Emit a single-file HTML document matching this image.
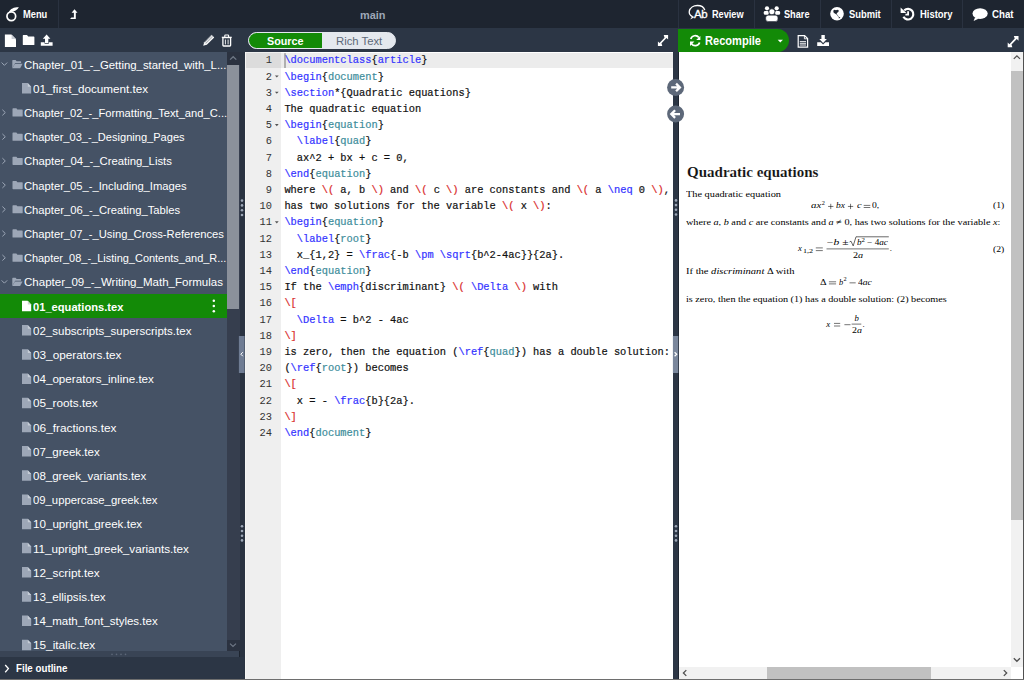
<!DOCTYPE html>
<html><head><meta charset="utf-8"><title>Overleaf</title>
<style>
*{margin:0;padding:0;box-sizing:border-box}
html,body{width:1024px;height:680px;overflow:hidden;background:#1e2530;position:relative;font-family:"Liberation Sans",sans-serif}
.a{position:absolute}
.t{line-height:0;white-space:nowrap}
svg{position:absolute;overflow:visible}
</style></head><body>

<div class="a" style="left:0px;top:0px;width:1024px;height:27.5px;background:#1e2530;"></div>
<div class="a t" style="left:23.00px;top:14.22px;font-family:'Liberation Sans',sans-serif;font-size:11.2px;color:#fff;font-weight:bold;font-style:normal;transform:scaleX(0.8310);transform-origin:0 0;">Menu</div>
<div class="a" style="left:58.1px;top:0px;width:1px;height:27.5px;background:#2a3240;"></div>
<div class="a t" style="left:359.80px;top:14.99px;font-family:'Liberation Sans',sans-serif;font-size:11px;color:#9da7b7;font-weight:bold;font-style:normal;transform:scaleX(0.9932);transform-origin:0 0;">main</div>
<div class="a" style="left:678.2px;top:0px;width:1px;height:27.5px;background:#2a3240;"></div>
<div class="a" style="left:754.4px;top:0px;width:1px;height:27.5px;background:#2a3240;"></div>
<div class="a" style="left:819.5px;top:0px;width:1px;height:27.5px;background:#2a3240;"></div>
<div class="a" style="left:890.5px;top:0px;width:1px;height:27.5px;background:#2a3240;"></div>
<div class="a" style="left:962.3px;top:0px;width:1px;height:27.5px;background:#2a3240;"></div>
<div class="a t" style="left:712.40px;top:14.38px;font-family:'Liberation Sans',sans-serif;font-size:11.3px;color:#fff;font-weight:bold;font-style:normal;transform:scaleX(0.8114);transform-origin:0 0;">Review</div>
<div class="a t" style="left:784.00px;top:14.38px;font-family:'Liberation Sans',sans-serif;font-size:11.3px;color:#fff;font-weight:bold;font-style:normal;transform:scaleX(0.8119);transform-origin:0 0;">Share</div>
<div class="a t" style="left:848.70px;top:14.38px;font-family:'Liberation Sans',sans-serif;font-size:11.3px;color:#fff;font-weight:bold;font-style:normal;transform:scaleX(0.8278);transform-origin:0 0;">Submit</div>
<div class="a t" style="left:919.70px;top:14.38px;font-family:'Liberation Sans',sans-serif;font-size:11.3px;color:#fff;font-weight:bold;font-style:normal;transform:scaleX(0.8348);transform-origin:0 0;">History</div>
<div class="a t" style="left:992.00px;top:14.38px;font-family:'Liberation Sans',sans-serif;font-size:11.3px;color:#fff;font-weight:bold;font-style:normal;transform:scaleX(0.8562);transform-origin:0 0;">Chat</div>
<div class="a" style="left:0px;top:27.5px;width:1024px;height:24.25px;background:#2c3645;"></div>
<div class="a" style="left:248.1px;top:31.9px;width:147.7px;height:17.2px;border-radius:9px;background:#e4e8ee;border:1.3px solid #e4e8ee"></div>
<div class="a" style="left:249.4px;top:33.2px;width:72.5px;height:14.6px;border-radius:8px 0 0 8px;background:#138a07"></div>
<div class="a t" style="left:266.90px;top:40.95px;font-family:'Liberation Sans',sans-serif;font-size:11.4px;color:#fff;font-weight:bold;font-style:normal;transform:scaleX(0.9470);transform-origin:0 0;">Source</div>
<div class="a t" style="left:336.00px;top:40.95px;font-family:'Liberation Sans',sans-serif;font-size:11.4px;color:#5d6879;font-weight:normal;font-style:normal;transform:scaleX(0.9920);transform-origin:0 0;">Rich Text</div>
<div class="a" style="left:678.4px;top:28.6px;width:110.4px;height:23.4px;border-radius:0 11.7px 11.7px 0;background:#138a07"></div>
<div class="a t" style="left:705.00px;top:40.74px;font-family:'Liberation Sans',sans-serif;font-size:12px;color:#fff;font-weight:bold;font-style:normal;transform:scaleX(0.9228);transform-origin:0 0;">Recompile</div>
<div class="a" style="left:0px;top:51.75px;width:227px;height:598.95px;background:#455265;"></div>
<div class="a t" style="left:24.30px;top:64.52px;font-family:'Liberation Sans',sans-serif;font-size:11.5px;color:#fff;font-weight:normal;font-style:normal;transform:scaleX(0.9894);transform-origin:0 0;">Chapter_01_-_Getting_started_with_L...</div>
<div class="a t" style="left:33.25px;top:88.72px;font-family:'Liberation Sans',sans-serif;font-size:11.5px;color:#fff;font-weight:normal;font-style:normal;transform:scaleX(1.0177);transform-origin:0 0;">01_first_document.tex</div>
<div class="a t" style="left:24.30px;top:112.92px;font-family:'Liberation Sans',sans-serif;font-size:11.5px;color:#fff;font-weight:normal;font-style:normal;transform:scaleX(0.9716);transform-origin:0 0;">Chapter_02_-_Formatting_Text_and_C...</div>
<div class="a t" style="left:24.30px;top:137.12px;font-family:'Liberation Sans',sans-serif;font-size:11.5px;color:#fff;font-weight:normal;font-style:normal;transform:scaleX(0.9624);transform-origin:0 0;">Chapter_03_-_Designing_Pages</div>
<div class="a t" style="left:24.30px;top:161.32px;font-family:'Liberation Sans',sans-serif;font-size:11.5px;color:#fff;font-weight:normal;font-style:normal;transform:scaleX(0.9842);transform-origin:0 0;">Chapter_04_-_Creating_Lists</div>
<div class="a t" style="left:24.30px;top:185.52px;font-family:'Liberation Sans',sans-serif;font-size:11.5px;color:#fff;font-weight:normal;font-style:normal;transform:scaleX(0.9744);transform-origin:0 0;">Chapter_05_-_Including_Images</div>
<div class="a t" style="left:24.30px;top:209.72px;font-family:'Liberation Sans',sans-serif;font-size:11.5px;color:#fff;font-weight:normal;font-style:normal;transform:scaleX(0.9767);transform-origin:0 0;">Chapter_06_-_Creating_Tables</div>
<div class="a t" style="left:24.30px;top:233.92px;font-family:'Liberation Sans',sans-serif;font-size:11.5px;color:#fff;font-weight:normal;font-style:normal;transform:scaleX(0.9742);transform-origin:0 0;">Chapter_07_-_Using_Cross-References</div>
<div class="a t" style="left:24.30px;top:258.12px;font-family:'Liberation Sans',sans-serif;font-size:11.5px;color:#fff;font-weight:normal;font-style:normal;transform:scaleX(0.9536);transform-origin:0 0;">Chapter_08_-_Listing_Contents_and_R...</div>
<div class="a t" style="left:24.30px;top:282.32px;font-family:'Liberation Sans',sans-serif;font-size:11.5px;color:#fff;font-weight:normal;font-style:normal;transform:scaleX(1.0021);transform-origin:0 0;">Chapter_09_-_Writing_Math_Formulas</div>
<div class="a" style="left:0px;top:293.75px;width:227px;height:24.2px;background:#138a07;"></div>
<div class="a t" style="left:33.25px;top:306.52px;font-family:'Liberation Sans',sans-serif;font-size:11.5px;color:#fff;font-weight:bold;font-style:normal;transform:scaleX(0.9688);transform-origin:0 0;">01_equations.tex</div>
<div class="a t" style="left:33.25px;top:330.72px;font-family:'Liberation Sans',sans-serif;font-size:11.5px;color:#fff;font-weight:normal;font-style:normal;transform:scaleX(1.0033);transform-origin:0 0;">02_subscripts_superscripts.tex</div>
<div class="a t" style="left:33.25px;top:354.92px;font-family:'Liberation Sans',sans-serif;font-size:11.5px;color:#fff;font-weight:normal;font-style:normal;transform:scaleX(1.0243);transform-origin:0 0;">03_operators.tex</div>
<div class="a t" style="left:33.25px;top:379.12px;font-family:'Liberation Sans',sans-serif;font-size:11.5px;color:#fff;font-weight:normal;font-style:normal;transform:scaleX(1.0113);transform-origin:0 0;">04_operators_inline.tex</div>
<div class="a t" style="left:33.25px;top:403.32px;font-family:'Liberation Sans',sans-serif;font-size:11.5px;color:#fff;font-weight:normal;font-style:normal;transform:scaleX(1.0215);transform-origin:0 0;">05_roots.tex</div>
<div class="a t" style="left:33.25px;top:427.52px;font-family:'Liberation Sans',sans-serif;font-size:11.5px;color:#fff;font-weight:normal;font-style:normal;transform:scaleX(1.0273);transform-origin:0 0;">06_fractions.tex</div>
<div class="a t" style="left:33.25px;top:451.72px;font-family:'Liberation Sans',sans-serif;font-size:11.5px;color:#fff;font-weight:normal;font-style:normal;transform:scaleX(1.0039);transform-origin:0 0;">07_greek.tex</div>
<div class="a t" style="left:33.25px;top:475.92px;font-family:'Liberation Sans',sans-serif;font-size:11.5px;color:#fff;font-weight:normal;font-style:normal;transform:scaleX(1.0009);transform-origin:0 0;">08_greek_variants.tex</div>
<div class="a t" style="left:33.25px;top:500.12px;font-family:'Liberation Sans',sans-serif;font-size:11.5px;color:#fff;font-weight:normal;font-style:normal;transform:scaleX(0.9823);transform-origin:0 0;">09_uppercase_greek.tex</div>
<div class="a t" style="left:33.25px;top:524.32px;font-family:'Liberation Sans',sans-serif;font-size:11.5px;color:#fff;font-weight:normal;font-style:normal;transform:scaleX(1.0102);transform-origin:0 0;">10_upright_greek.tex</div>
<div class="a t" style="left:33.25px;top:548.52px;font-family:'Liberation Sans',sans-serif;font-size:11.5px;color:#fff;font-weight:normal;font-style:normal;transform:scaleX(1.0133);transform-origin:0 0;">11_upright_greek_variants.tex</div>
<div class="a t" style="left:33.25px;top:572.72px;font-family:'Liberation Sans',sans-serif;font-size:11.5px;color:#fff;font-weight:normal;font-style:normal;transform:scaleX(1.0223);transform-origin:0 0;">12_script.tex</div>
<div class="a t" style="left:33.25px;top:596.92px;font-family:'Liberation Sans',sans-serif;font-size:11.5px;color:#fff;font-weight:normal;font-style:normal;transform:scaleX(1.0057);transform-origin:0 0;">13_ellipsis.tex</div>
<div class="a t" style="left:33.25px;top:621.12px;font-family:'Liberation Sans',sans-serif;font-size:11.5px;color:#fff;font-weight:normal;font-style:normal;transform:scaleX(0.9999);transform-origin:0 0;">14_math_font_styles.tex</div>
<div class="a t" style="left:33.25px;top:645.32px;font-family:'Liberation Sans',sans-serif;font-size:11.5px;color:#fff;font-weight:normal;font-style:normal;transform:scaleX(1.0234);transform-origin:0 0;">15_italic.tex</div>
<div class="a" style="left:227px;top:51.75px;width:12.5px;height:598.95px;background:#363e4e;"></div>
<div class="a" style="left:227px;top:51.75px;width:12.5px;height:13.3px;background:#2b3240;"></div>
<div class="a" style="left:227px;top:639.6px;width:12.5px;height:11.1px;background:#2b3240;"></div>
<div class="a" style="left:227px;top:65px;width:12.3px;height:244px;background:#8b919b;"></div>
<div class="a" style="left:239.5px;top:51.75px;width:5.7px;height:628.25px;background:#2a3341;"></div>
<div class="a" style="left:0px;top:650.7px;width:239px;height:6.3px;background:#394455;"></div>
<div class="a" style="left:0px;top:657px;width:244.4px;height:22px;background:#2c3645;"></div>
<div class="a t" style="left:15.50px;top:668.32px;font-family:'Liberation Sans',sans-serif;font-size:11.2px;color:#fff;font-weight:bold;font-style:normal;transform:scaleX(0.8712);transform-origin:0 0;">File outline</div>
<div class="a" style="left:245.2px;top:51.75px;width:427.90000000000003px;height:628.25px;background:#ffffff;"></div>
<div class="a" style="left:245.2px;top:51.75px;width:35.900000000000034px;height:628.25px;background:#efefef;"></div>
<div class="a" style="left:245.2px;top:51.75px;width:1px;height:628.25px;background:#f6f6f4;"></div>
<div class="a" style="left:246.2px;top:53.199999999999996px;width:34.900000000000034px;height:15.0px;background:#dcdcdc;"></div>
<div class="a" style="left:281.1px;top:53.199999999999996px;width:392.0px;height:15.0px;background:#ececec;"></div>
<div class="a t" style="left:284.40px;top:60.40px;font-family:'Liberation Mono',monospace;font-size:10.37px;color:#111;font-weight:normal;font-style:normal;white-space:pre;-webkit-text-stroke:0.2px currentColor"><span style="color:#3434ff">\documentclass</span>{<span style="color:#3434ff">article</span>}</div>
<div class="a t" style="left:265.68px;top:60.40px;font-family:'Liberation Mono',monospace;font-size:10.37px;color:#333;font-weight:normal;font-style:normal;">1</div>
<div class="a t" style="left:284.40px;top:76.60px;font-family:'Liberation Mono',monospace;font-size:10.37px;color:#111;font-weight:normal;font-style:normal;white-space:pre;-webkit-text-stroke:0.2px currentColor"><span style="color:#3434ff">\begin</span>{<span style="color:#3d8d9b">document</span>}</div>
<div class="a t" style="left:265.68px;top:76.60px;font-family:'Liberation Mono',monospace;font-size:10.37px;color:#333;font-weight:normal;font-style:normal;">2</div>
<div class="a t" style="left:284.40px;top:92.80px;font-family:'Liberation Mono',monospace;font-size:10.37px;color:#111;font-weight:normal;font-style:normal;white-space:pre;-webkit-text-stroke:0.2px currentColor"><span style="color:#3434ff">\section</span>*{Quadratic equations}</div>
<div class="a t" style="left:265.68px;top:92.80px;font-family:'Liberation Mono',monospace;font-size:10.37px;color:#333;font-weight:normal;font-style:normal;">3</div>
<div class="a t" style="left:284.40px;top:109.00px;font-family:'Liberation Mono',monospace;font-size:10.37px;color:#111;font-weight:normal;font-style:normal;white-space:pre;-webkit-text-stroke:0.2px currentColor">The quadratic equation</div>
<div class="a t" style="left:265.68px;top:109.00px;font-family:'Liberation Mono',monospace;font-size:10.37px;color:#333;font-weight:normal;font-style:normal;">4</div>
<div class="a t" style="left:284.40px;top:125.20px;font-family:'Liberation Mono',monospace;font-size:10.37px;color:#111;font-weight:normal;font-style:normal;white-space:pre;-webkit-text-stroke:0.2px currentColor"><span style="color:#3434ff">\begin</span>{<span style="color:#3d8d9b">equation</span>}</div>
<div class="a t" style="left:265.68px;top:125.20px;font-family:'Liberation Mono',monospace;font-size:10.37px;color:#333;font-weight:normal;font-style:normal;">5</div>
<div class="a t" style="left:284.40px;top:141.40px;font-family:'Liberation Mono',monospace;font-size:10.37px;color:#111;font-weight:normal;font-style:normal;white-space:pre;-webkit-text-stroke:0.2px currentColor">  <span style="color:#3434ff">\label</span>{<span style="color:#3d8d9b">quad</span>}</div>
<div class="a t" style="left:265.68px;top:141.40px;font-family:'Liberation Mono',monospace;font-size:10.37px;color:#333;font-weight:normal;font-style:normal;">6</div>
<div class="a t" style="left:284.40px;top:157.60px;font-family:'Liberation Mono',monospace;font-size:10.37px;color:#111;font-weight:normal;font-style:normal;white-space:pre;-webkit-text-stroke:0.2px currentColor">  ax^2 + bx + c = 0,</div>
<div class="a t" style="left:265.68px;top:157.60px;font-family:'Liberation Mono',monospace;font-size:10.37px;color:#333;font-weight:normal;font-style:normal;">7</div>
<div class="a t" style="left:284.40px;top:173.80px;font-family:'Liberation Mono',monospace;font-size:10.37px;color:#111;font-weight:normal;font-style:normal;white-space:pre;-webkit-text-stroke:0.2px currentColor"><span style="color:#3434ff">\end</span>{<span style="color:#3d8d9b">equation</span>}</div>
<div class="a t" style="left:265.68px;top:173.80px;font-family:'Liberation Mono',monospace;font-size:10.37px;color:#333;font-weight:normal;font-style:normal;">8</div>
<div class="a t" style="left:284.40px;top:190.00px;font-family:'Liberation Mono',monospace;font-size:10.37px;color:#111;font-weight:normal;font-style:normal;white-space:pre;-webkit-text-stroke:0.2px currentColor">where <span style="color:#d92c2c">\(</span> a, b <span style="color:#d92c2c">\)</span> and <span style="color:#d92c2c">\(</span> c <span style="color:#d92c2c">\)</span> are constants and <span style="color:#d92c2c">\(</span> a <span style="color:#3434ff">\neq</span> 0 <span style="color:#d92c2c">\)</span>,</div>
<div class="a t" style="left:265.68px;top:190.00px;font-family:'Liberation Mono',monospace;font-size:10.37px;color:#333;font-weight:normal;font-style:normal;">9</div>
<div class="a t" style="left:284.40px;top:206.20px;font-family:'Liberation Mono',monospace;font-size:10.37px;color:#111;font-weight:normal;font-style:normal;white-space:pre;-webkit-text-stroke:0.2px currentColor">has two solutions for the variable <span style="color:#d92c2c">\(</span> x <span style="color:#d92c2c">\)</span>:</div>
<div class="a t" style="left:259.46px;top:206.20px;font-family:'Liberation Mono',monospace;font-size:10.37px;color:#333;font-weight:normal;font-style:normal;">10</div>
<div class="a t" style="left:284.40px;top:222.40px;font-family:'Liberation Mono',monospace;font-size:10.37px;color:#111;font-weight:normal;font-style:normal;white-space:pre;-webkit-text-stroke:0.2px currentColor"><span style="color:#3434ff">\begin</span>{<span style="color:#3d8d9b">equation</span>}</div>
<div class="a t" style="left:259.46px;top:222.40px;font-family:'Liberation Mono',monospace;font-size:10.37px;color:#333;font-weight:normal;font-style:normal;">11</div>
<div class="a t" style="left:284.40px;top:238.60px;font-family:'Liberation Mono',monospace;font-size:10.37px;color:#111;font-weight:normal;font-style:normal;white-space:pre;-webkit-text-stroke:0.2px currentColor">  <span style="color:#3434ff">\label</span>{<span style="color:#3d8d9b">root</span>}</div>
<div class="a t" style="left:259.46px;top:238.60px;font-family:'Liberation Mono',monospace;font-size:10.37px;color:#333;font-weight:normal;font-style:normal;">12</div>
<div class="a t" style="left:284.40px;top:254.80px;font-family:'Liberation Mono',monospace;font-size:10.37px;color:#111;font-weight:normal;font-style:normal;white-space:pre;-webkit-text-stroke:0.2px currentColor">  x_{1,2} = <span style="color:#3434ff">\frac</span>{-b <span style="color:#3434ff">\pm</span> <span style="color:#3434ff">\sqrt</span>{b^2-4ac}}{2a}.</div>
<div class="a t" style="left:259.46px;top:254.80px;font-family:'Liberation Mono',monospace;font-size:10.37px;color:#333;font-weight:normal;font-style:normal;">13</div>
<div class="a t" style="left:284.40px;top:271.00px;font-family:'Liberation Mono',monospace;font-size:10.37px;color:#111;font-weight:normal;font-style:normal;white-space:pre;-webkit-text-stroke:0.2px currentColor"><span style="color:#3434ff">\end</span>{<span style="color:#3d8d9b">equation</span>}</div>
<div class="a t" style="left:259.46px;top:271.00px;font-family:'Liberation Mono',monospace;font-size:10.37px;color:#333;font-weight:normal;font-style:normal;">14</div>
<div class="a t" style="left:284.40px;top:287.20px;font-family:'Liberation Mono',monospace;font-size:10.37px;color:#111;font-weight:normal;font-style:normal;white-space:pre;-webkit-text-stroke:0.2px currentColor">If the <span style="color:#3434ff">\emph</span>{discriminant} <span style="color:#d92c2c">\(</span> <span style="color:#3434ff">\Delta</span> <span style="color:#d92c2c">\)</span> with</div>
<div class="a t" style="left:259.46px;top:287.20px;font-family:'Liberation Mono',monospace;font-size:10.37px;color:#333;font-weight:normal;font-style:normal;">15</div>
<div class="a t" style="left:284.40px;top:303.40px;font-family:'Liberation Mono',monospace;font-size:10.37px;color:#111;font-weight:normal;font-style:normal;white-space:pre;-webkit-text-stroke:0.2px currentColor"><span style="color:#d92c2c">\[</span></div>
<div class="a t" style="left:259.46px;top:303.40px;font-family:'Liberation Mono',monospace;font-size:10.37px;color:#333;font-weight:normal;font-style:normal;">16</div>
<div class="a t" style="left:284.40px;top:319.60px;font-family:'Liberation Mono',monospace;font-size:10.37px;color:#111;font-weight:normal;font-style:normal;white-space:pre;-webkit-text-stroke:0.2px currentColor">  <span style="color:#3434ff">\Delta</span> = b^2 - 4ac</div>
<div class="a t" style="left:259.46px;top:319.60px;font-family:'Liberation Mono',monospace;font-size:10.37px;color:#333;font-weight:normal;font-style:normal;">17</div>
<div class="a t" style="left:284.40px;top:335.80px;font-family:'Liberation Mono',monospace;font-size:10.37px;color:#111;font-weight:normal;font-style:normal;white-space:pre;-webkit-text-stroke:0.2px currentColor"><span style="color:#d92c2c">\]</span></div>
<div class="a t" style="left:259.46px;top:335.80px;font-family:'Liberation Mono',monospace;font-size:10.37px;color:#333;font-weight:normal;font-style:normal;">18</div>
<div class="a t" style="left:284.40px;top:352.00px;font-family:'Liberation Mono',monospace;font-size:10.37px;color:#111;font-weight:normal;font-style:normal;white-space:pre;-webkit-text-stroke:0.2px currentColor">is zero, then the equation (<span style="color:#3434ff">\ref</span>{<span style="color:#3d8d9b">quad</span>}) has a double solution:</div>
<div class="a t" style="left:259.46px;top:352.00px;font-family:'Liberation Mono',monospace;font-size:10.37px;color:#333;font-weight:normal;font-style:normal;">19</div>
<div class="a t" style="left:284.40px;top:368.20px;font-family:'Liberation Mono',monospace;font-size:10.37px;color:#111;font-weight:normal;font-style:normal;white-space:pre;-webkit-text-stroke:0.2px currentColor">(<span style="color:#3434ff">\ref</span>{<span style="color:#3d8d9b">root</span>}) becomes</div>
<div class="a t" style="left:259.46px;top:368.20px;font-family:'Liberation Mono',monospace;font-size:10.37px;color:#333;font-weight:normal;font-style:normal;">20</div>
<div class="a t" style="left:284.40px;top:384.40px;font-family:'Liberation Mono',monospace;font-size:10.37px;color:#111;font-weight:normal;font-style:normal;white-space:pre;-webkit-text-stroke:0.2px currentColor"><span style="color:#d92c2c">\[</span></div>
<div class="a t" style="left:259.46px;top:384.40px;font-family:'Liberation Mono',monospace;font-size:10.37px;color:#333;font-weight:normal;font-style:normal;">21</div>
<div class="a t" style="left:284.40px;top:400.60px;font-family:'Liberation Mono',monospace;font-size:10.37px;color:#111;font-weight:normal;font-style:normal;white-space:pre;-webkit-text-stroke:0.2px currentColor">  x = - <span style="color:#3434ff">\frac</span>{b}{2a}.</div>
<div class="a t" style="left:259.46px;top:400.60px;font-family:'Liberation Mono',monospace;font-size:10.37px;color:#333;font-weight:normal;font-style:normal;">22</div>
<div class="a t" style="left:284.40px;top:416.80px;font-family:'Liberation Mono',monospace;font-size:10.37px;color:#111;font-weight:normal;font-style:normal;white-space:pre;-webkit-text-stroke:0.2px currentColor"><span style="color:#d92c2c">\]</span></div>
<div class="a t" style="left:259.46px;top:416.80px;font-family:'Liberation Mono',monospace;font-size:10.37px;color:#333;font-weight:normal;font-style:normal;">23</div>
<div class="a t" style="left:284.40px;top:433.00px;font-family:'Liberation Mono',monospace;font-size:10.37px;color:#111;font-weight:normal;font-style:normal;white-space:pre;-webkit-text-stroke:0.2px currentColor"><span style="color:#3434ff">\end</span>{<span style="color:#3d8d9b">document</span>}</div>
<div class="a t" style="left:259.46px;top:433.00px;font-family:'Liberation Mono',monospace;font-size:10.37px;color:#333;font-weight:normal;font-style:normal;">24</div>
<div class="a" style="left:673.1px;top:51.75px;width:5.399999999999977px;height:628.25px;background:#2c3645;"></div>
<div class="a" style="left:678.5px;top:51.75px;width:344.5px;height:628.25px;background:#ffffff;"></div>
<div class="a" style="left:1010.8px;top:51.75px;width:12.2px;height:615.25px;background:#f1f1f1;"></div>
<div class="a" style="left:1010.8px;top:71px;width:12.2px;height:449px;background:#c1c1c1;"></div>
<div class="a" style="left:678.5px;top:667px;width:332.29999999999995px;height:12px;background:#f1f1f1;"></div>
<div class="a" style="left:767px;top:667px;width:163.5px;height:12px;background:#c1c1c1;"></div>
<div class="a" style="left:1023px;top:51.75px;width:1px;height:628.25px;background:#505050;"></div>
<div class="a" style="left:0px;top:679px;width:1024px;height:1px;background:#6e6e6e;"></div>
<div class="a t" style="left:686.90px;top:172.88px;font-family:'Liberation Serif',serif;font-size:14px;color:#111;font-weight:bold;font-style:normal;transform:scaleX(1.0725);transform-origin:0 0;-webkit-text-stroke:0.1px #fff">Quadratic equations</div>
<div class="a t" style="left:686.40px;top:193.86px;font-family:'Liberation Serif',serif;font-size:8.7px;color:#000;font-weight:normal;font-style:normal;transform:scaleX(1.1858);transform-origin:0 0;">The quadratic equation</div>
<div class="a t" style="left:686.40px;top:221.56px;font-family:'Liberation Serif',serif;font-size:8.7px;color:#000;font-weight:normal;font-style:normal;transform:scaleX(1.1751);transform-origin:0 0;">where <i>a</i>, <i>b</i> and <i>c</i> are constants and <i>a</i> &ne; 0, has two solutions for the variable <i>x</i>:</div>
<div class="a t" style="left:686.40px;top:270.56px;font-family:'Liberation Serif',serif;font-size:8.7px;color:#000;font-weight:normal;font-style:normal;transform:scaleX(1.2108);transform-origin:0 0;">If the <i>discriminant</i> &Delta; with</div>
<div class="a t" style="left:686.40px;top:298.86px;font-family:'Liberation Serif',serif;font-size:8.7px;color:#000;font-weight:normal;font-style:normal;transform:scaleX(1.1721);transform-origin:0 0;">is zero, then the equation (1) has a double solution: (2) becomes</div>
<div class="a t" style="left:811.00px;top:205.36px;font-family:'Liberation Serif',serif;font-size:8.7px;color:#000;font-weight:normal;font-style:normal;transform:scaleX(1.2422);transform-origin:0 0;"><i>ax</i></div>
<div class="a t" style="left:821.80px;top:203.07px;font-family:'Liberation Serif',serif;font-size:6.3px;color:#000;font-weight:normal;font-style:normal;">2</div>
<div class="a t" style="left:836.30px;top:205.36px;font-family:'Liberation Serif',serif;font-size:8.7px;color:#000;font-weight:normal;font-style:normal;transform:scaleX(1.0805);transform-origin:0 0;"><i>bx</i></div>
<div class="a t" style="left:856.50px;top:205.36px;font-family:'Liberation Serif',serif;font-size:8.7px;color:#000;font-weight:normal;font-style:normal;transform:scaleX(1.1913);transform-origin:0 0;"><i>c</i></div>
<div class="a t" style="left:872.40px;top:205.36px;font-family:'Liberation Serif',serif;font-size:8.7px;color:#000;font-weight:normal;font-style:normal;transform:scaleX(1.1034);transform-origin:0 0;">0,</div>
<div class="a t" style="left:992.60px;top:205.46px;font-family:'Liberation Serif',serif;font-size:8.7px;color:#000;font-weight:normal;font-style:normal;transform:scaleX(1.1139);transform-origin:0 0;">(1)</div>
<div class="a t" style="left:992.60px;top:248.56px;font-family:'Liberation Serif',serif;font-size:8.7px;color:#000;font-weight:normal;font-style:normal;transform:scaleX(1.1139);transform-origin:0 0;">(2)</div>
<div class="a t" style="left:819.60px;top:281.76px;font-family:'Liberation Serif',serif;font-size:8.7px;color:#000;font-weight:normal;font-style:normal;transform:scaleX(1.1797);transform-origin:0 0;">&Delta;</div>
<div class="a t" style="left:839.20px;top:281.76px;font-family:'Liberation Serif',serif;font-size:8.7px;color:#000;font-weight:normal;font-style:normal;transform:scaleX(0.9655);transform-origin:0 0;"><i>b</i></div>
<div class="a t" style="left:843.60px;top:278.97px;font-family:'Liberation Serif',serif;font-size:6.3px;color:#000;font-weight:normal;font-style:normal;">2</div>
<div class="a t" style="left:858.30px;top:281.76px;font-family:'Liberation Serif',serif;font-size:8.7px;color:#000;font-weight:normal;font-style:normal;transform:scaleX(1.1016);transform-origin:0 0;">4<i>ac</i></div>
<div class="a t" style="left:798.00px;top:248.16px;font-family:'Liberation Serif',serif;font-size:8.7px;color:#000;font-weight:normal;font-style:normal;"><i>x</i></div>
<div class="a t" style="left:802.90px;top:250.97px;font-family:'Liberation Serif',serif;font-size:6.6px;color:#000;font-weight:normal;font-style:normal;transform:scaleX(1.2364);transform-origin:0 0;">1,2</div>
<div class="a t" style="left:826.50px;top:242.26px;font-family:'Liberation Serif',serif;font-size:8.7px;color:#000;font-weight:normal;font-style:normal;transform:scaleX(1.3266);transform-origin:0 0;">&minus;<i>b</i> &plusmn;</div>
<div class="a t" style="left:857.00px;top:242.26px;font-family:'Liberation Serif',serif;font-size:8.7px;color:#000;font-weight:normal;font-style:normal;transform:scaleX(1.0490);transform-origin:0 0;"><i>b</i><sup style="font-size:6.5px;vertical-align:baseline;position:relative;top:-3.2px;line-height:0">2</sup> &minus; 4<i>ac</i></div>
<div class="a t" style="left:853.40px;top:254.56px;font-family:'Liberation Serif',serif;font-size:8.7px;color:#000;font-weight:normal;font-style:normal;transform:scaleX(1.1691);transform-origin:0 0;">2<i>a</i></div>
<div class="a t" style="left:889.80px;top:248.16px;font-family:'Liberation Serif',serif;font-size:8.7px;color:#000;font-weight:normal;font-style:normal;">.</div>
<div class="a t" style="left:826.30px;top:323.66px;font-family:'Liberation Serif',serif;font-size:8.7px;color:#000;font-weight:normal;font-style:normal;"><i>x</i></div>
<div class="a t" style="left:854.40px;top:318.06px;font-family:'Liberation Serif',serif;font-size:8.7px;color:#000;font-weight:normal;font-style:normal;"><i>b</i></div>
<div class="a t" style="left:852.00px;top:329.86px;font-family:'Liberation Serif',serif;font-size:8.7px;color:#000;font-weight:normal;font-style:normal;transform:scaleX(1.1447);transform-origin:0 0;">2<i>a</i></div>
<div class="a t" style="left:862.40px;top:323.66px;font-family:'Liberation Serif',serif;font-size:8.7px;color:#000;font-weight:normal;font-style:normal;">.</div>
<svg class="a" style="left:0;top:0" width="1024" height="680" viewBox="0 0 1024 680"><circle cx="11.3" cy="16.2" r="4.35" fill="none" stroke="#ffffff" stroke-width="1.7"/><path d="M8.9,12.2 C10.2,8.4 14.4,7.1 18.9,7.2 C17.6,9.9 14.6,11.6 10.4,11.9 Z" fill="#ffffff"/><path d="M74.5,9.3 L77.5,12.8 L75.8,12.8 L75.8,19.1 L70.1,19.1 L71.4,17.5 L73.9,17.5 L73.9,12.8 L71.6,12.8 Z" fill="#ffffff"/><path d="M692.3,16.6 C689.9,15.4 689,13.1 689.3,11.2 C690,7.6 693.6,5.5 697.4,5.5 C701.1,5.5 704,7.3 704.8,10.2" fill="none" stroke="#ffffff" stroke-width="1.3"/><path d="M692.6,15.8 L690.2,19.6 L694.2,17.2 Z" fill="#ffffff"/><text x="693.9" y="17.7" font-family="Liberation Sans" font-size="11" fill="#ffffff" stroke="#ffffff" stroke-width="0.3" letter-spacing="-0.2" textLength="13.6" lengthAdjust="spacingAndGlyphs">Ab</text><circle cx="767" cy="8.3" r="2.1" fill="#ffffff"/><circle cx="776.7" cy="8.3" r="2.1" fill="#ffffff"/><rect x="763.8" y="10.9" width="4.9" height="3.8" rx="1.3" fill="#ffffff"/><rect x="775.2" y="10.9" width="4.9" height="3.8" rx="1.3" fill="#ffffff"/><circle cx="771.9" cy="11.8" r="3.0" fill="#ffffff" stroke="#1e2530" stroke-width="0.7"/><rect x="765.7" y="15.2" width="12.2" height="6.3" rx="2.6" fill="#ffffff" stroke="#1e2530" stroke-width="0.5"/><circle cx="837" cy="13.7" r="6.8" fill="#ffffff"/><path d="M833.2,10.8 L834.4,9.7 L836,10.2 L837.4,9.8 L838.9,10.4 L838.3,12 L836.9,12.9 L836.6,14.5 L835.3,13.8 L833.7,12.7 Z" fill="#1e2530"/><path d="M836.6,14.2 Q837.6,15.6 838.6,16.8" fill="none" stroke="#1e2530" stroke-width="0.6"/><path d="M838.6,17.5 C839.2,16.8 840.2,16.8 840.2,17.4 C839.8,18.2 839,18.4 838.6,18.3 Z" fill="#1e2530"/><path d="M904.3,10.4 A5.3,5.3 0 1 1 903.4,16.8" fill="none" stroke="#ffffff" stroke-width="2.2"/><path d="M900.6,7.5 L906.4,13 L900.6,13 Z" fill="#ffffff"/><path d="M908.1,11.2 V14.6 H905.4" fill="none" stroke="#ffffff" stroke-width="1.8"/><ellipse cx="980.1" cy="13.6" rx="7.6" ry="5.3" fill="#ffffff"/><path d="M975,17.6 L973.6,21.1 L979,18.6 Z" fill="#ffffff"/><path d="M4.9,34.5 H11.3 L16,39.2 V46.9 H4.9 Z" fill="#ffffff"/><path d="M11.6,34.5 V38.9 H16 Z" fill="#c9cdd4"/><path d="M22.8,35.6 Q22.8,35 23.4,35 H27 L28.2,36.6 H33.8 Q34.4,36.6 34.4,37.2 V44.4 Q34.4,45 33.8,45 H23.4 Q22.8,45 22.8,44.4 Z" fill="#ffffff"/><path d="M46.6,34.6 L50.4,38.8 L48.3,38.8 L48.3,43 L45,43 L45,38.8 L42.8,38.8 Z" fill="#ffffff"/><path d="M40.8,42.2 H44.6 V43.8 H48.8 V42.2 H52.6 V45.8 H40.8 Z" fill="#ffffff"/><path d="M203.2,45.8 L204.2,42.2 L211.6,34.8 L214.2,37.4 L206.8,44.8 Z" fill="#ffffff"/><path d="M204.6,42.6 L211.8,35.6 M205.6,43.6 L212.8,36.6" stroke="#2c3645" stroke-width="0.5"/><path d="M222.9,37.6 H230.6 V45.3 Q230.6,46 229.9,46 H223.6 Q222.9,46 222.9,45.3 Z" fill="none" stroke="#ffffff" stroke-width="1.3"/><path d="M221.8,37.3 H231.7" stroke="#ffffff" stroke-width="1.2"/><path d="M224.8,37.2 V35.6 Q224.8,35 225.4,35 H228 Q228.6,35 228.6,35.6 V37.2" fill="none" stroke="#ffffff" stroke-width="1.1"/><path d="M225.4,39.5 V44.4 M228.1,39.5 V44.4" stroke="#ffffff" stroke-width="0.9"/><path d="M668.1,35 V39.62 L666.47,37.97 L661.47,43.36 L662.29,46 H657.9 V41.38 L659.53,43.03 L664.53,37.64 L663.71,35 Z" fill="#ffffff"/><path d="M1018.5,35.9 V40.65 L1016.77,38.95 L1011.48,44.49 L1012.34,47.2 H1007.7 V42.45 L1009.43,44.15 L1014.72,38.61 L1013.86,35.9 Z" fill="#ffffff"/><path d="M690.8,38.9 A4.6,4.6 0 0 1 698.9,37.6" fill="none" stroke="#ffffff" stroke-width="1.7"/><path d="M700.4,35.9 V40.1 H696.2 Z" fill="#ffffff"/><path d="M699.6,42.5 A4.6,4.6 0 0 1 691.5,43.8" fill="none" stroke="#ffffff" stroke-width="1.7"/><path d="M690.0,45.9 V41.4 H694.4 Z" fill="#ffffff"/><path d="M777.7,39.7 H782.9 L780.3,42.4 Z" fill="#ffffff"/><path d="M798.2,35.6 H804.6 L807.6,38.6 V47.2 H798.2 Z" fill="none" stroke="#ffffff" stroke-width="1.2"/><path d="M804.4,35.6 V38.8 H807.6" fill="none" stroke="#ffffff" stroke-width="0.9"/><path d="M799.8,41.6 H806 M799.8,43.3 H806 M799.8,45 H806" stroke="#ffffff" stroke-width="0.9"/><path d="M821.4,35 H824.8 V39 H826.9 L823.1,43 L819.3,39 H821.4 Z" fill="#ffffff"/><path d="M817.2,42.2 H820.8 L823.1,44.4 L825.4,42.2 H829 V46 H817.2 Z" fill="#ffffff"/><path d="M1.6,62.55 L4.4,65.35 L7.2,62.55" fill="none" stroke="#9da7b7" stroke-width="1"/><path d="M12.3,68.15 V60.55 Q12.3,59.95 12.9,59.95 H15.6 L16.6,61.15 H20.6 Q21.1,61.15 21.1,61.65 V62.95 H15.2 Z" fill="#9da7b7"/><path d="M12.3,68.15 L14.9,63.75 H22.6 L20.1,68.15 Z" fill="#9da7b7"/><path d="M22,83.05 H27.6 L31.2,86.65 V93.55 H22 Z" fill="#9da7b7"/><path d="M27.8,83.05 V86.75 H31.2 Z" fill="#c5ccd6"/><path d="M2.4,109.75 L5.3,112.55 L2.4,115.35" fill="none" stroke="#9da7b7" stroke-width="1"/><path d="M12.5,108.95 Q12.5,108.35 13.1,108.35 H16.4 L17.4,109.55 H22.1 Q22.7,109.55 22.7,110.15 V115.95 Q22.7,116.55 22.1,116.55 H13.1 Q12.5,116.55 12.5,115.95 Z" fill="#9da7b7"/><path d="M2.4,133.95 L5.3,136.75 L2.4,139.55" fill="none" stroke="#9da7b7" stroke-width="1"/><path d="M12.5,133.15 Q12.5,132.55 13.1,132.55 H16.4 L17.4,133.75 H22.1 Q22.7,133.75 22.7,134.35 V140.15 Q22.7,140.75 22.1,140.75 H13.1 Q12.5,140.75 12.5,140.15 Z" fill="#9da7b7"/><path d="M2.4,158.15 L5.3,160.95 L2.4,163.75" fill="none" stroke="#9da7b7" stroke-width="1"/><path d="M12.5,157.35 Q12.5,156.75 13.1,156.75 H16.4 L17.4,157.95 H22.1 Q22.7,157.95 22.7,158.55 V164.35 Q22.7,164.95 22.1,164.95 H13.1 Q12.5,164.95 12.5,164.35 Z" fill="#9da7b7"/><path d="M2.4,182.35 L5.3,185.15 L2.4,187.95" fill="none" stroke="#9da7b7" stroke-width="1"/><path d="M12.5,181.55 Q12.5,180.95 13.1,180.95 H16.4 L17.4,182.15 H22.1 Q22.7,182.15 22.7,182.75 V188.55 Q22.7,189.15 22.1,189.15 H13.1 Q12.5,189.15 12.5,188.55 Z" fill="#9da7b7"/><path d="M2.4,206.55 L5.3,209.35 L2.4,212.15" fill="none" stroke="#9da7b7" stroke-width="1"/><path d="M12.5,205.75 Q12.5,205.15 13.1,205.15 H16.4 L17.4,206.35 H22.1 Q22.7,206.35 22.7,206.95 V212.75 Q22.7,213.35 22.1,213.35 H13.1 Q12.5,213.35 12.5,212.75 Z" fill="#9da7b7"/><path d="M2.4,230.75 L5.3,233.55 L2.4,236.35" fill="none" stroke="#9da7b7" stroke-width="1"/><path d="M12.5,229.95 Q12.5,229.35 13.1,229.35 H16.4 L17.4,230.55 H22.1 Q22.7,230.55 22.7,231.15 V236.95 Q22.7,237.55 22.1,237.55 H13.1 Q12.5,237.55 12.5,236.95 Z" fill="#9da7b7"/><path d="M2.4,254.95 L5.3,257.75 L2.4,260.55" fill="none" stroke="#9da7b7" stroke-width="1"/><path d="M12.5,254.15 Q12.5,253.55 13.1,253.55 H16.4 L17.4,254.75 H22.1 Q22.7,254.75 22.7,255.35 V261.15 Q22.7,261.75 22.1,261.75 H13.1 Q12.5,261.75 12.5,261.15 Z" fill="#9da7b7"/><path d="M1.6,280.35 L4.4,283.15 L7.2,280.35" fill="none" stroke="#9da7b7" stroke-width="1"/><path d="M12.3,285.95 V278.35 Q12.3,277.75 12.9,277.75 H15.6 L16.6,278.95 H20.6 Q21.1,278.95 21.1,279.45 V280.75 H15.2 Z" fill="#9da7b7"/><path d="M12.3,285.95 L14.9,281.55 H22.6 L20.1,285.95 Z" fill="#9da7b7"/><path d="M22,300.85 H27.6 L31.2,304.45 V311.35 H22 Z" fill="#ffffff"/><path d="M27.8,300.85 V304.55 H31.2 Z" fill="#cfd6cf"/><circle cx="213.8" cy="300.65" r="1.25" fill="#ffffff"/><circle cx="213.8" cy="305.95" r="1.25" fill="#ffffff"/><circle cx="213.8" cy="311.25" r="1.25" fill="#ffffff"/><path d="M22,325.05 H27.6 L31.2,328.65 V335.55 H22 Z" fill="#9da7b7"/><path d="M27.8,325.05 V328.75 H31.2 Z" fill="#c5ccd6"/><path d="M22,349.25 H27.6 L31.2,352.85 V359.75 H22 Z" fill="#9da7b7"/><path d="M27.8,349.25 V352.95 H31.2 Z" fill="#c5ccd6"/><path d="M22,373.45 H27.6 L31.2,377.05 V383.95 H22 Z" fill="#9da7b7"/><path d="M27.8,373.45 V377.15 H31.2 Z" fill="#c5ccd6"/><path d="M22,397.65 H27.6 L31.2,401.25 V408.15 H22 Z" fill="#9da7b7"/><path d="M27.8,397.65 V401.35 H31.2 Z" fill="#c5ccd6"/><path d="M22,421.85 H27.6 L31.2,425.45 V432.35 H22 Z" fill="#9da7b7"/><path d="M27.8,421.85 V425.55 H31.2 Z" fill="#c5ccd6"/><path d="M22,446.05 H27.6 L31.2,449.65 V456.55 H22 Z" fill="#9da7b7"/><path d="M27.8,446.05 V449.75 H31.2 Z" fill="#c5ccd6"/><path d="M22,470.25 H27.6 L31.2,473.85 V480.75 H22 Z" fill="#9da7b7"/><path d="M27.8,470.25 V473.95 H31.2 Z" fill="#c5ccd6"/><path d="M22,494.45 H27.6 L31.2,498.05 V504.95 H22 Z" fill="#9da7b7"/><path d="M27.8,494.45 V498.15 H31.2 Z" fill="#c5ccd6"/><path d="M22,518.65 H27.6 L31.2,522.25 V529.15 H22 Z" fill="#9da7b7"/><path d="M27.8,518.65 V522.35 H31.2 Z" fill="#c5ccd6"/><path d="M22,542.85 H27.6 L31.2,546.45 V553.35 H22 Z" fill="#9da7b7"/><path d="M27.8,542.85 V546.55 H31.2 Z" fill="#c5ccd6"/><path d="M22,567.05 H27.6 L31.2,570.65 V577.55 H22 Z" fill="#9da7b7"/><path d="M27.8,567.05 V570.75 H31.2 Z" fill="#c5ccd6"/><path d="M22,591.25 H27.6 L31.2,594.85 V601.75 H22 Z" fill="#9da7b7"/><path d="M27.8,591.25 V594.95 H31.2 Z" fill="#c5ccd6"/><path d="M22,615.45 H27.6 L31.2,619.05 V625.95 H22 Z" fill="#9da7b7"/><path d="M27.8,615.45 V619.15 H31.2 Z" fill="#c5ccd6"/><path d="M22,639.65 H27.6 L31.2,643.25 V650.15 H22 Z" fill="#9da7b7"/><path d="M27.8,639.65 V643.35 H31.2 Z" fill="#c5ccd6"/><path d="M230.1,59.6 L233.2,56.7 L236.3,59.6" fill="none" stroke="#6f7886" stroke-width="1.3"/><path d="M230,643.6 L233,646.4 L236,643.6" fill="none" stroke="#6f7886" stroke-width="1.2"/><circle cx="242" cy="200.6" r="1.3" fill="#9da7b7"/><circle cx="242" cy="205.4" r="1.3" fill="#9da7b7"/><circle cx="242" cy="210.2" r="1.3" fill="#9da7b7"/><circle cx="242" cy="215" r="1.3" fill="#9da7b7"/><circle cx="242" cy="526.3" r="1.3" fill="#9da7b7"/><circle cx="242" cy="531" r="1.3" fill="#9da7b7"/><circle cx="242" cy="535.7" r="1.3" fill="#9da7b7"/><circle cx="242" cy="540.4" r="1.3" fill="#9da7b7"/><circle cx="112" cy="654.4" r="0.8" fill="#5d6879"/><circle cx="116.5" cy="654.4" r="0.8" fill="#5d6879"/><circle cx="121" cy="654.4" r="0.8" fill="#5d6879"/><circle cx="125.5" cy="654.4" r="0.8" fill="#5d6879"/><path d="M5.2,665 L8.4,668.6 L5.2,672.2" fill="none" stroke="#ffffff" stroke-width="1.3"/><rect x="238.9" y="336" width="5.7" height="37" fill="#6f7c93"/><path d="M242.8,352.2 L240.8,354.2 L242.8,356.2" fill="none" stroke="#ffffff" stroke-width="1"/><circle cx="675.6" cy="87.4" r="8.5" fill="#5d6879"/><path d="M671.2,87.4 H679.4 M676.1,83.6 L679.9,87.4 L676.1,91.2" fill="none" stroke="#ffffff" stroke-width="2.3"/><circle cx="675.6" cy="114.1" r="8.5" fill="#5d6879"/><path d="M680,114.1 H671.8 M675.1,110.3 L671.3,114.1 L675.1,117.9" fill="none" stroke="#ffffff" stroke-width="2.3"/><circle cx="676" cy="200.4" r="1.3" fill="#9da7b7"/><circle cx="676" cy="205.1" r="1.3" fill="#9da7b7"/><circle cx="676" cy="209.8" r="1.3" fill="#9da7b7"/><circle cx="676" cy="214.5" r="1.3" fill="#9da7b7"/><circle cx="676" cy="526.3" r="1.3" fill="#9da7b7"/><circle cx="676" cy="531" r="1.3" fill="#9da7b7"/><circle cx="676" cy="535.7" r="1.3" fill="#9da7b7"/><circle cx="676" cy="540.4" r="1.3" fill="#9da7b7"/><rect x="672.9" y="336" width="5.4" height="37" fill="#7a879c"/><path d="M674.6,352.3 L676.7,354.3 L674.6,356.3" fill="none" stroke="#ffffff" stroke-width="1.2"/><path d="M1013.8,58.9 L1016.9,55.8 L1020,58.9" fill="none" stroke="#505050" stroke-width="1.3"/><path d="M1013.8,658.2 L1016.9,661.3 L1020,658.2" fill="none" stroke="#505050" stroke-width="1.3"/><path d="M686.3,670.1 L683.4,673 L686.3,675.9" fill="none" stroke="#505050" stroke-width="1.3"/><path d="M1003.8,670.1 L1006.7,673 L1003.8,675.9" fill="none" stroke="#505050" stroke-width="1.3"/><path d="M274.9,75.50 H278.7 L276.8,77.60 Z" fill="#555"/><path d="M274.9,91.70 H278.7 L276.8,93.80 Z" fill="#555"/><path d="M274.9,124.10 H278.7 L276.8,126.20 Z" fill="#555"/><path d="M274.9,221.30 H278.7 L276.8,223.40 Z" fill="#555"/><path d="M815.8,247.9 H822.8 M815.8,250.6 H822.8" stroke="#000" stroke-width="0.55"/><path d="M826.5,248.9 H888.8" stroke="#000" stroke-width="0.55"/><path d="M849.6,241.9 L851,241.2 L853.2,245.9 L856,236.8 H888.8" fill="none" stroke="#000" stroke-width="0.6"/><path d="M834,323.4 H840.2 M834,326 H840.2" stroke="#000" stroke-width="0.55"/><path d="M844.4,324.7 H850.5" stroke="#000" stroke-width="0.55"/><path d="M851.6,324.1 H861.3" stroke="#000" stroke-width="0.55"/><path d="M828.1,206.45 H833.4 M830.75,203.8 V209.1 M847.9,206.45 H853.2 M850.55,203.8 V209.1" stroke="#000" stroke-width="0.55"/><path d="M863.7,205.4 H870.3 M863.7,207.5 H870.3" stroke="#000" stroke-width="0.55"/><path d="M828.9,281.8 H836.1 M828.9,283.9 H836.1 M849.5,282.85 H855.7" stroke="#000" stroke-width="0.55"/><rect x="284.4" y="53.2" width="1.2" height="14.8" fill="#888"/></svg>
</body></html>
